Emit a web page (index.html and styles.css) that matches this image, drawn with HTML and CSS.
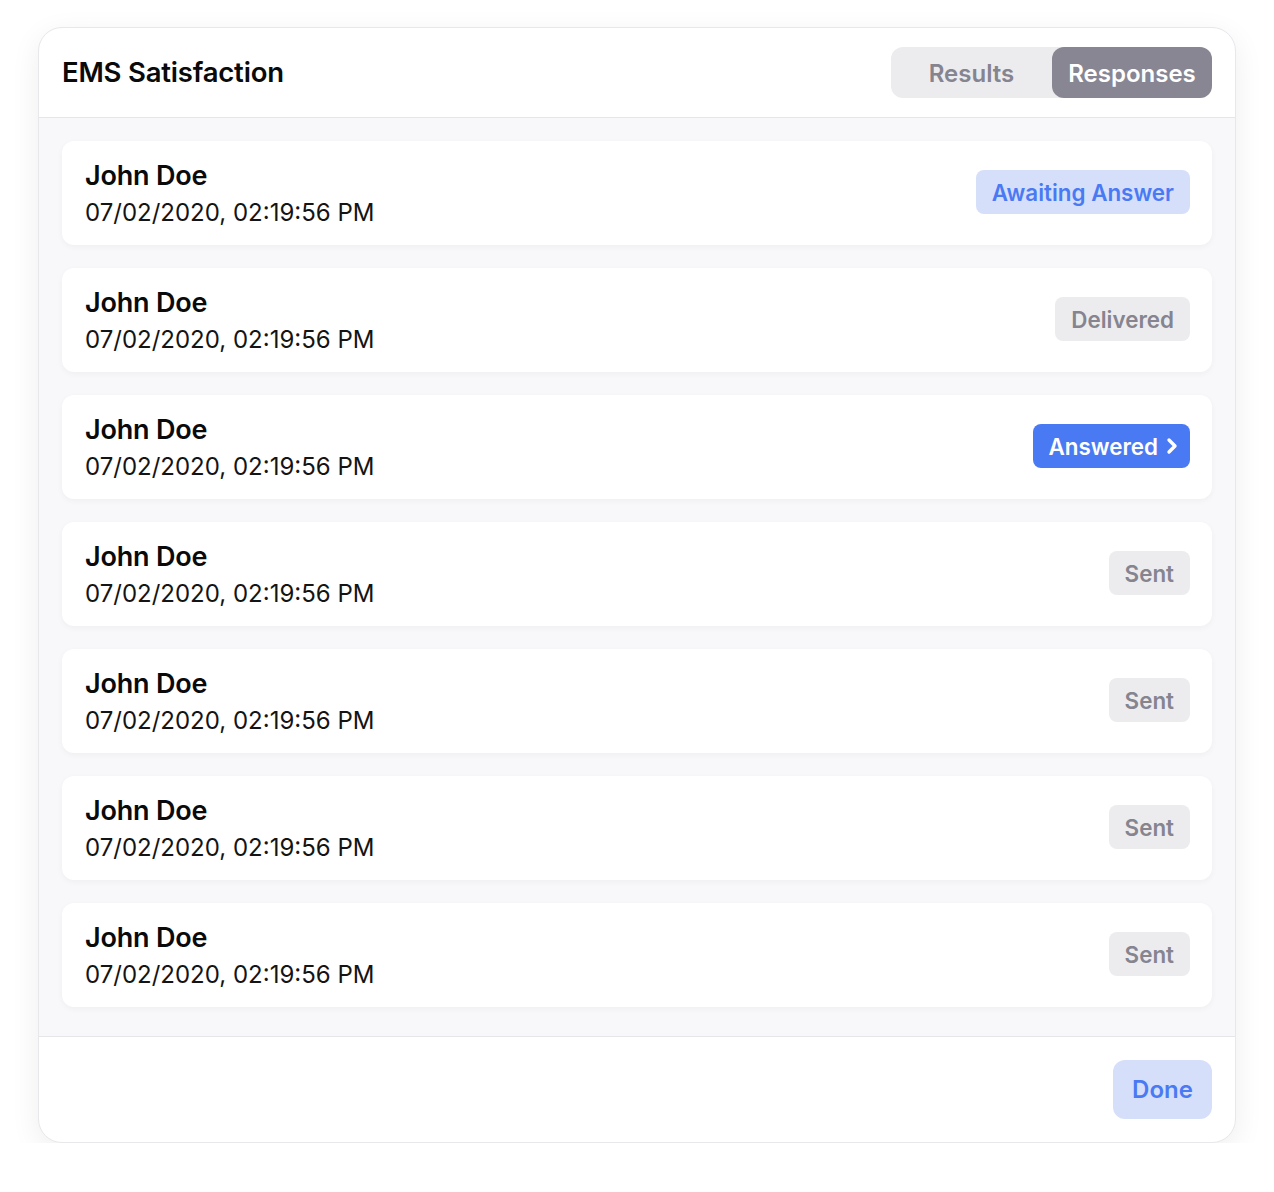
FILE: index.html
```html
<!DOCTYPE html>
<html>
<head>
<meta charset="utf-8">
<link rel="stylesheet" href="styles.css">
</head>
<body>
<div class="modal">
  <header class="modal-header">
    <h1 class="title">EMS Satisfaction</h1>
    <div class="segmented">
      <button class="seg">Results</button>
      <button class="seg seg-active">Responses</button>
    </div>
  </header>
  <main class="modal-body">
    <div class="row">
      <div class="info"><div class="name">John Doe</div><div class="date">07/02/2020, 02:19:56 PM</div></div>
      <span class="badge badge-await">Awaiting Answer</span>
    </div>
    <div class="row">
      <div class="info"><div class="name">John Doe</div><div class="date">07/02/2020, 02:19:56 PM</div></div>
      <span class="badge badge-gray">Delivered</span>
    </div>
    <div class="row">
      <div class="info"><div class="name">John Doe</div><div class="date">07/02/2020, 02:19:56 PM</div></div>
      <span class="badge badge-answered">Answered<svg class="chev" width="12" height="18" viewBox="0 0 12 18"><path d="M3 3 L9 9 L3 15" fill="none" stroke="#fff" stroke-width="3.4" stroke-linecap="round" stroke-linejoin="round"/></svg></span>
    </div>
    <div class="row">
      <div class="info"><div class="name">John Doe</div><div class="date">07/02/2020, 02:19:56 PM</div></div>
      <span class="badge badge-gray">Sent</span>
    </div>
    <div class="row">
      <div class="info"><div class="name">John Doe</div><div class="date">07/02/2020, 02:19:56 PM</div></div>
      <span class="badge badge-gray">Sent</span>
    </div>
    <div class="row">
      <div class="info"><div class="name">John Doe</div><div class="date">07/02/2020, 02:19:56 PM</div></div>
      <span class="badge badge-gray">Sent</span>
    </div>
    <div class="row">
      <div class="info"><div class="name">John Doe</div><div class="date">07/02/2020, 02:19:56 PM</div></div>
      <span class="badge badge-gray">Sent</span>
    </div>
  </main>
  <footer class="modal-footer">
    <button class="done">Done</button>
  </footer>
</div>
</body>
</html>
```
FILE: styles.css
```css
* { box-sizing: border-box; }
html, body { margin: 0; padding: 0; background: #ffffff; }
body {
  font-family: Inter, "Noto Sans", "Liberation Sans", sans-serif;
  padding: 27px 38px 0 38px;
}
.modal {
  width: 1198px;
  height: 1116px;
  border: 1px solid #e8e8ec;
  border-radius: 24px;
  background: #fff;
  box-shadow: 0 8px 30px rgba(0,0,0,0.07);
  overflow: hidden;
  display: flex;
  flex-direction: column;
}
.modal-header {
  height: 90px;
  display: flex;
  align-items: center;
  justify-content: space-between;
  padding: 0 23px 0 23px;
  border-bottom: 1px solid #e6e6ea;
  flex: none;
}
.title {
  margin: 0;
  font-size: 27.5px;
  font-weight: 600;
  color: #0a0a0a;
  letter-spacing: -0.2px;
  position: relative;
  top: -1px;
}
.segmented {
  display: flex;
  background: #ececef;
  border-radius: 12px;
  height: 51px;
  width: 321px;
}
.seg {
  border: none;
  background: transparent;
  font-family: inherit;
  font-size: 24px;
  font-weight: 600;
  color: #85848f;
  border-radius: 12px;
  height: 51px;
  padding: 2px 0 0 0;
  cursor: pointer;
}
.seg:first-child { width: 161px; }
.seg-active {
  width: 160px;
  background: #878692;
  color: #fff;
}
.modal-body {
  flex: 1;
  background: #f8f8fa;
  padding: 23px 23px 0 23px;
  display: flex;
  flex-direction: column;
  gap: 23px;
}
.row {
  height: 104px;
  background: #fff;
  border-radius: 12px;
  box-shadow: 0 2px 6px rgba(0,0,0,0.04);
  display: flex;
  align-items: center;
  justify-content: space-between;
  padding: 0 22px 0 23px;
}
.info { padding-top: 2px; }
.badge { margin-top: -2px; }
.name {
  font-size: 27px;
  font-weight: 600;
  color: #0a0a0a;
  line-height: 34px;
  letter-spacing: -0.2px;
}
.date {
  font-size: 24px;
  font-weight: 400;
  color: #141414;
  line-height: 34px;
  margin-top: 3px;
}
.badge {
  display: inline-flex;
  align-items: center;
  height: 44px;
  padding: 0 16px;
  border-radius: 8px;
  font-size: 22.4px;
  font-weight: 600;
}
.badge-await { background: #d5dffa; color: #4a7af3; }
.badge-gray { background: #ececef; color: #85848f; }
.badge-answered { background: #4a7af3; color: #fff; gap: 8px; padding: 0 12px 0 15px; }
.chev { display: block; }
.modal-footer {
  height: 106px;
  border-top: 1px solid #e6e6ea;
  display: flex;
  align-items: center;
  justify-content: flex-end;
  padding: 0 23px;
  flex: none;
}
.done {
  border: none;
  background: #d5dffa;
  color: #4a7af3;
  font-family: inherit;
  font-size: 24px;
  font-weight: 600;
  height: 59px;
  width: 99px;
  border-radius: 12px;
  cursor: pointer;
  padding: 0;
}
```
